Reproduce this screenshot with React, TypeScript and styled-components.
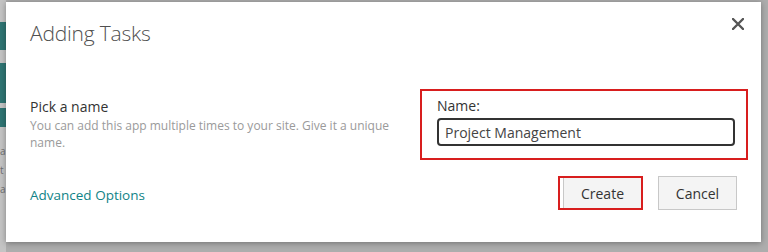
import React from 'react';
import styled, { createGlobalStyle } from 'styled-components';

const GlobalStyle = createGlobalStyle`
	html, body {
		margin: 0;
		padding: 0;
		background: #b2b2b2;
	}
	#root {
		width: 768px;
		height: 252px;
		overflow: hidden;
	}
`;

const Backdrop = styled.div`
	display: flex;
	width: 768px;
	height: 252px;
	background: #adadad;
	font-family: 'Segoe UI', 'Open Sans', 'Liberation Sans', sans-serif;
`;

// sliver of the page behind the overlay
const PageEdge = styled.div`
	display: flex;
	flex-direction: column;
	width: 6px;
	padding-top: 22px;
	background: #c4c4c4;
	overflow: hidden;
`;

const PageTile = styled.div<{ h: number; gap: number }>`
	height: ${p => p.h}px;
	margin-bottom: ${p => p.gap}px;
	background: #2f7573;
`;

const PageLetter = styled.span`
	display: block;
	height: 19px;
	font-size: 10px;
	line-height: 19px;
	color: #6e6e6e;
`;

const Dialog = styled.div`
	display: flex;
	flex-direction: column;
	width: 755px;
	height: 240px;
	margin-top: 2px;
	padding: 0 24px;
	box-sizing: border-box;
	background: #fff;
	box-shadow: 0 1px 6px rgba(0, 0, 0, 0.35);
`;

const TitleBar = styled.div`
	display: flex;
	justify-content: space-between;
	align-items: flex-start;
	height: 62px;
`;

const Title = styled.h1`
	margin: 0;
	padding-top: 17px;
	font-size: 21px;
	line-height: 28px;
	font-weight: 300;
	color: #505050;
	letter-spacing: -0.2px;
`;

const CloseButton = styled.button`
	display: flex;
	align-items: center;
	justify-content: center;
	width: 24px;
	height: 24px;
	margin: 10px -13px 0 0;
	padding: 0;
	border: none;
	background: none;
	cursor: pointer;
`;

const Body = styled.div`
	display: grid;
	grid-template-columns: 1fr 317px;
	margin-top: 25px;
`;

const Intro = styled.div`
	padding-top: 8px;
`;

const SectionTitle = styled.div`
	font-size: 14px;
	line-height: 19px;
	color: #333;
`;

const Hint = styled.div`
	max-width: 366px;
	margin-top: 1px;
	font-size: 12px;
	line-height: 17px;
	color: #9a9a9a;
`;

const Callout = styled.div`
	margin-right: -11px;
	padding: 5px 11px 12px 15px;
	border: 2px solid #d81e1e;
`;

const FieldLabel = styled.label`
	display: block;
	font-size: 14px;
	line-height: 20px;
	color: #333;
`;

const TextInput = styled.input`
	display: block;
	width: 100%;
	height: 28px;
	margin-top: 2px;
	padding: 0 6px;
	box-sizing: border-box;
	border: 2px solid #333;
	border-radius: 4px;
	font-family: inherit;
	font-size: 14px;
	color: #444;
	outline: none;
`;

const Footer = styled.div`
	display: flex;
	justify-content: space-between;
	align-items: center;
	margin-top: 16px;
`;

const Link = styled.a`
	padding-top: 3px;
	font-size: 13.5px;
	color: #0f8387;
	text-decoration: none;
`;

const Actions = styled.div`
	display: flex;
	align-items: center;
	gap: 15px;
`;

// red annotation frame around the Create button
const Highlight = styled.span`
	display: inline-flex;
	height: 34px;
	padding-left: 3px;
	box-sizing: border-box;
	border: 2px solid #d81e1e;
`;

const Button = styled.button<{ framed?: boolean }>`
	width: ${p => (p.framed ? 78 : 79)}px;
	height: ${p => (p.framed ? 30 : 34)}px;
	padding: 0;
	border: 1px solid #c8c8c8;
	border-top-width: ${p => (p.framed ? 0 : 1)}px;
	border-bottom-width: ${p => (p.framed ? 0 : 1)}px;
	border-right-width: ${p => (p.framed ? 0 : 1)}px;
	background: #f4f4f4;
	font-family: inherit;
	font-size: 14px;
	color: #333;
	cursor: pointer;
`;

export default function App() {
	return (
		<>
			<GlobalStyle />
			<Backdrop>
				<PageEdge>
					<PageTile h={28} gap={13} />
					<PageTile h={40} gap={5} />
					<PageTile h={19} gap={15} />
					<PageLetter>a</PageLetter>
					<PageLetter>t</PageLetter>
					<PageLetter>a</PageLetter>
				</PageEdge>
				<Dialog>
					<TitleBar>
						<Title>Adding Tasks</Title>
						<CloseButton aria-label='Close'>
							<svg width='12' height='12' viewBox='0 0 12 12'>
								<path d='M1 1 L11 11 M11 1 L1 11' stroke='#555' strokeWidth='2.4' strokeLinecap='round' />
							</svg>
						</CloseButton>
					</TitleBar>
					<Body>
						<Intro>
							<SectionTitle>Pick a name</SectionTitle>
							<Hint>You can add this app multiple times to your site. Give it a unique name.</Hint>
						</Intro>
						<Callout>
							<FieldLabel htmlFor='app-name'>Name:</FieldLabel>
							<TextInput id='app-name' defaultValue='Project Management' />
						</Callout>
					</Body>
					<Footer>
						<Link href='#'>Advanced Options</Link>
						<Actions>
							<Highlight>
								<Button framed>Create</Button>
							</Highlight>
							<Button>Cancel</Button>
						</Actions>
					</Footer>
				</Dialog>
			</Backdrop>
		</>
	);
}
